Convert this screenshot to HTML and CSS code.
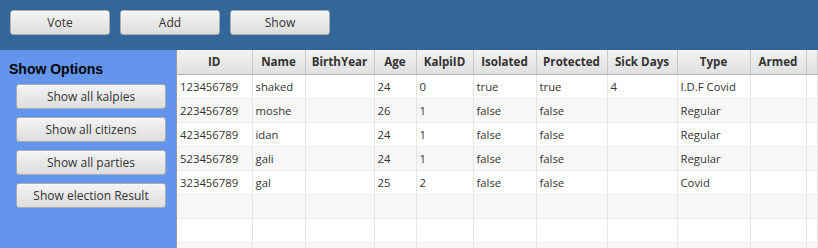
FILE: index.html
```html
<!DOCTYPE html>
<html lang="en">
<head>
    <meta charset="UTF-8">
    <meta name="viewport" content="width=device-width, initial-scale=1.0">
    <title>Election</title>
    <link rel="stylesheet" href="styles.css">
</head>
<body>
    <div class="app">
        <div class="top-bar">
            <button class="btn top-btn">Vote</button>
            <button class="btn top-btn">Add</button>
            <button class="btn top-btn">Show</button>
        </div>
        <div class="main">
            <div class="side">
                <div class="side-title">Show Options</div>
                <button class="btn side-btn">Show all kalpies</button>
                <button class="btn side-btn">Show all citizens</button>
                <button class="btn side-btn">Show all parties</button>
                <button class="btn side-btn">Show election Result</button>
            </div>
            <div class="table-wrap">
                <table class="grid">
                    <colgroup>
                        <col style="width:75px">
                        <col style="width:53px">
                        <col style="width:69px">
                        <col style="width:42px">
                        <col style="width:57px">
                        <col style="width:63px">
                        <col style="width:71px">
                        <col style="width:70px">
                        <col style="width:73px">
                        <col style="width:56px">
                        <col>
                    </colgroup>
                    <thead>
                        <tr>
                            <th>ID</th>
                            <th>Name</th>
                            <th>BirthYear</th>
                            <th>Age</th>
                            <th>KalpiID</th>
                            <th>Isolated</th>
                            <th>Protected</th>
                            <th>Sick Days</th>
                            <th>Type</th>
                            <th>Armed</th>
                            <th></th>
                        </tr>
                    </thead>
                    <tbody>
                        <tr><td>123456789</td><td>shaked</td><td></td><td>24</td><td>0</td><td>true</td><td>true</td><td>4</td><td>I.D.F Covid</td><td></td><td></td></tr>
                        <tr><td>223456789</td><td>moshe</td><td></td><td>26</td><td>1</td><td>false</td><td>false</td><td></td><td>Regular</td><td></td><td></td></tr>
                        <tr><td>423456789</td><td>idan</td><td></td><td>24</td><td>1</td><td>false</td><td>false</td><td></td><td>Regular</td><td></td><td></td></tr>
                        <tr><td>523456789</td><td>gali</td><td></td><td>24</td><td>1</td><td>false</td><td>false</td><td></td><td>Regular</td><td></td><td></td></tr>
                        <tr><td>323456789</td><td>gal</td><td></td><td>25</td><td>2</td><td>false</td><td>false</td><td></td><td>Covid</td><td></td><td></td></tr>
                        <tr><td></td><td></td><td></td><td></td><td></td><td></td><td></td><td></td><td></td><td></td><td></td></tr>
                        <tr><td></td><td></td><td></td><td></td><td></td><td></td><td></td><td></td><td></td><td></td><td></td></tr>
                        <tr><td></td><td></td><td></td><td></td><td></td><td></td><td></td><td></td><td></td><td></td><td></td></tr>
                    </tbody>
                </table>
            </div>
        </div>
    </div>
</body>
</html>
```

FILE: styles.css
```css
body {
    margin: 0;
    font-family: "Open Sans", "Noto Sans", sans-serif;
    font-size: 11.3px;
    color: #333;
}

.app {
    width: 818px;
    height: 248px;
    overflow: hidden;
    display: flex;
    flex-direction: column;
}

.top-bar {
    height: 50px;
    box-sizing: border-box;
    padding: 10px;
    display: flex;
    gap: 10px;
    align-items: flex-start;
    background-color: #336699;
}

.btn {
    font-family: inherit;
    font-size: 12px;
    color: #333;
    height: 25px;
    padding: 0;
    border: 1px solid #a9acb0;
    border-radius: 3px;
    background: linear-gradient(#f4f4f4, #dddddd);
    box-shadow: inset 0 1px 0 #fbfbfb;
    cursor: pointer;
}

.top-btn {
    width: 100px;
}

.main {
    flex: 1;
    display: flex;
    min-height: 0;
}

.side {
    width: 176px;
    flex: none;
    background-color: #6495ed;
    padding: 11px 0 0 0;
    box-sizing: border-box;
    display: flex;
    flex-direction: column;
    gap: 8px;
}

.side-title {
    font-family: "Liberation Sans", Arial, sans-serif;
    font-weight: bold;
    font-size: 14px;
    line-height: 16px;
    color: #000;
    padding-left: 9px;
    margin-bottom: -1px;
}

.side-btn {
    width: 150px;
    margin-left: 16px;
}

.table-wrap {
    flex: 1;
    background: #fff;
    border-left: 1px solid #9a9a9a;
    overflow: hidden;
}

.grid {
    width: 641px;
    table-layout: fixed;
    border-collapse: collapse;
}

.grid th {
    height: 24px;
    padding: 0;
    font-weight: bold;
    font-size: 11.6px;
    text-align: center;
    color: #333;
    background: linear-gradient(#f2f2f2, #e0e0e0);
    border-right: 1px solid #c8c8c8;
    border-bottom: 1px solid #b4b4b4;
    box-sizing: border-box;
}

.grid td {
    height: 24px;
    padding: 0 0 0 3px;
    border-right: 1px solid #e6e6e6;
    border-bottom: 1px solid #ececec;
    box-sizing: border-box;
    white-space: nowrap;
    overflow: hidden;
}

.grid tbody tr:nth-child(even) {
    background-color: #f7f7f7;
}
```
